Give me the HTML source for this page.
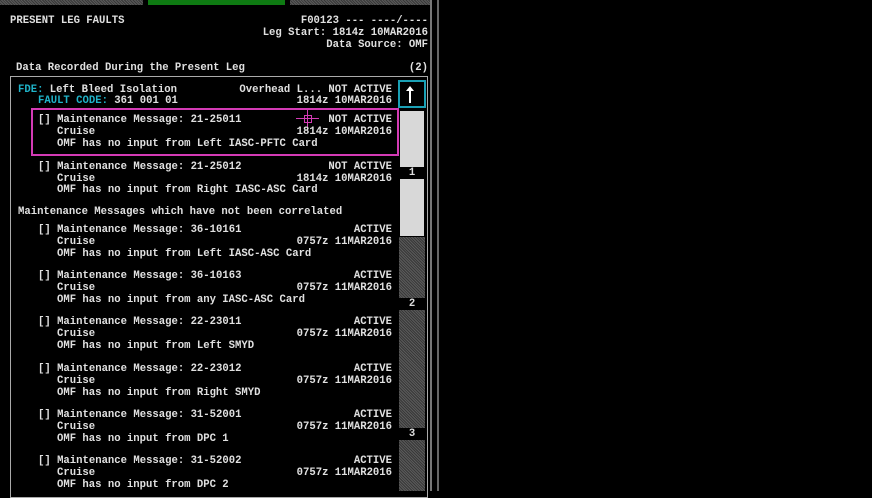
<!DOCTYPE html>
<html><head><style>
body{margin:0;width:872px;height:491px;background:#000;overflow:hidden;position:relative;font-family:"Liberation Mono",monospace;font-weight:bold;font-size:10.6px;color:#e0e0e0}
.t{position:absolute;line-height:12px;height:12px;white-space:pre;margin-top:1px}
.r{text-align:right}
.c{color:#1fb3c9}
.pat{background:repeating-linear-gradient(45deg,#5a5a5a 0 1px,#383838 1px 2px)}
</style></head><body>
<div class="pat" style="position:absolute;left:0;top:0;width:143px;height:5px"></div>
<div style="position:absolute;left:148px;top:0;width:137px;height:5px;background:#0e7a12"></div>
<div class="pat" style="position:absolute;left:290px;top:0;width:140px;height:5px"></div>
<div style="position:absolute;left:430px;top:0;width:2px;height:491px;background:#777"></div>
<div style="position:absolute;left:437px;top:0;width:2px;height:491px;background:#666"></div>

<div class="t" style="left:10px;top:14px">PRESENT LEG FAULTS</div>
<div class="t r" style="right:444px;top:14px">F00123 --- ----/----</div>
<div class="t r" style="right:444px;top:26px">Leg Start: 1814z 10MAR2016</div>
<div class="t r" style="right:444px;top:38px">Data Source: OMF</div>
<div class="t" style="left:16px;top:61px">Data Recorded During the Present Leg</div>
<div class="t r" style="right:444px;top:61px">(2)</div>

<div style="position:absolute;left:10px;top:76px;width:416px;height:420px;border:1px solid #aaa"></div>
<div style="position:absolute;left:398px;top:80px;width:24px;height:24px;border:2px solid #1aa0b5"></div>
<div style="position:absolute;left:409px;top:89px;width:2px;height:14px;background:#fff"></div>
<div style="position:absolute;left:406px;top:86px;width:0;height:0;border-left:4px solid transparent;border-right:4px solid transparent;border-bottom:5px solid #fff"></div>
<div style="position:absolute;left:400px;top:111px;width:24px;height:125px;background:#d8d8d8"></div>
<div class="pat" style="position:absolute;left:399px;top:237px;width:26px;height:254px"></div>
<div class="t" style="left:399px;top:166px;width:26px;background:#000;text-align:center;color:#ddd">1</div>
<div class="t" style="left:399px;top:297px;width:26px;background:#000;text-align:center;color:#ddd">2</div>
<div class="t" style="left:399px;top:427px;width:26px;background:#000;text-align:center;color:#ddd">3</div>

<div class="t" style="left:18px;top:83px"><span class="c">FDE:</span> Left Bleed Isolation</div>
<div class="t r" style="right:480px;top:83px">Overhead L... NOT ACTIVE</div>
<div class="t" style="left:38px;top:94px"><span class="c">FAULT CODE:</span> 361 001 01</div>
<div class="t r" style="right:480px;top:94px">1814z 10MAR2016</div>

<div style="position:absolute;left:31px;top:108px;width:364px;height:44px;border:2px solid #d43bb5"></div>
<div style="position:absolute;left:304px;top:115px;width:6px;height:6px;border:1px solid #d43bb5"></div>
<div style="position:absolute;left:296px;top:118px;width:23px;height:1px;background:#d43bb5"></div>
<div style="position:absolute;left:307px;top:108px;width:1px;height:22px;background:#d43bb5"></div>

<div class="t" style="left:38px;top:113px">[] Maintenance Message: 21-25011</div>
<div class="t r" style="right:480px;top:113px">NOT ACTIVE</div>
<div class="t" style="left:57px;top:125px">Cruise</div>
<div class="t r" style="right:480px;top:125px">1814z 10MAR2016</div>
<div class="t" style="left:57px;top:137px">OMF has no input from Left IASC-PFTC Card</div>

<div class="t" style="left:38px;top:160px">[] Maintenance Message: 21-25012</div>
<div class="t r" style="right:480px;top:160px">NOT ACTIVE</div>
<div class="t" style="left:57px;top:172px">Cruise</div>
<div class="t r" style="right:480px;top:172px">1814z 10MAR2016</div>
<div class="t" style="left:57px;top:183px">OMF has no input from Right IASC-ASC Card</div>

<div class="t" style="left:18px;top:205px">Maintenance Messages which have not been correlated</div>

<div class="t" style="left:38px;top:223px">[] Maintenance Message: 36-10161</div>
<div class="t r" style="right:480px;top:223px">ACTIVE</div>
<div class="t" style="left:57px;top:235px">Cruise</div>
<div class="t r" style="right:480px;top:235px">0757z 11MAR2016</div>
<div class="t" style="left:57px;top:247px">OMF has no input from Left IASC-ASC Card</div>

<div class="t" style="left:38px;top:269px">[] Maintenance Message: 36-10163</div>
<div class="t r" style="right:480px;top:269px">ACTIVE</div>
<div class="t" style="left:57px;top:281px">Cruise</div>
<div class="t r" style="right:480px;top:281px">0757z 11MAR2016</div>
<div class="t" style="left:57px;top:293px">OMF has no input from any IASC-ASC Card</div>

<div class="t" style="left:38px;top:315px">[] Maintenance Message: 22-23011</div>
<div class="t r" style="right:480px;top:315px">ACTIVE</div>
<div class="t" style="left:57px;top:327px">Cruise</div>
<div class="t r" style="right:480px;top:327px">0757z 11MAR2016</div>
<div class="t" style="left:57px;top:339px">OMF has no input from Left SMYD</div>

<div class="t" style="left:38px;top:362px">[] Maintenance Message: 22-23012</div>
<div class="t r" style="right:480px;top:362px">ACTIVE</div>
<div class="t" style="left:57px;top:374px">Cruise</div>
<div class="t r" style="right:480px;top:374px">0757z 11MAR2016</div>
<div class="t" style="left:57px;top:386px">OMF has no input from Right SMYD</div>

<div class="t" style="left:38px;top:408px">[] Maintenance Message: 31-52001</div>
<div class="t r" style="right:480px;top:408px">ACTIVE</div>
<div class="t" style="left:57px;top:420px">Cruise</div>
<div class="t r" style="right:480px;top:420px">0757z 11MAR2016</div>
<div class="t" style="left:57px;top:432px">OMF has no input from DPC 1</div>

<div class="t" style="left:38px;top:454px">[] Maintenance Message: 31-52002</div>
<div class="t r" style="right:480px;top:454px">ACTIVE</div>
<div class="t" style="left:57px;top:466px">Cruise</div>
<div class="t r" style="right:480px;top:466px">0757z 11MAR2016</div>
<div class="t" style="left:57px;top:478px">OMF has no input from DPC 2</div>
</body></html>
